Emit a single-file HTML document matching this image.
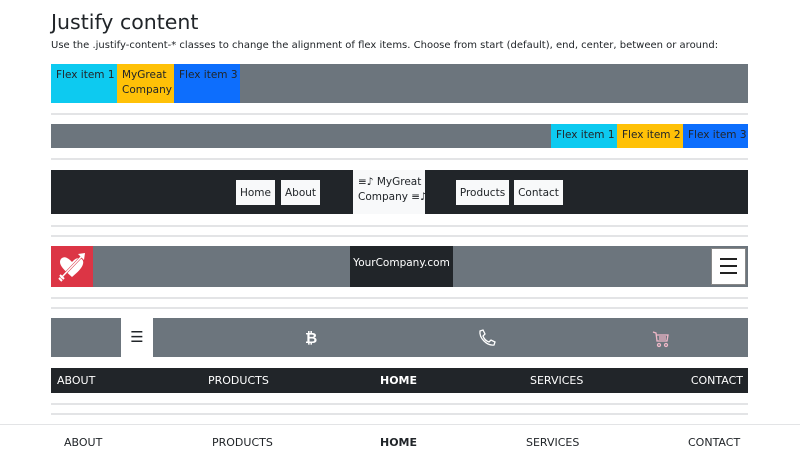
<!DOCTYPE html>
<html><head><style>
*{margin:0;padding:0;box-sizing:border-box}
body{width:800px;height:450px;overflow:hidden;background:#fff;font-family:"DejaVu Sans","Liberation Sans",sans-serif;color:#212529;position:relative}
.a{position:absolute}
.hr{position:absolute;left:51px;width:697px;height:2px;background:#e3e4e6}
.t{font-size:10.5px;line-height:15px;white-space:nowrap}
.btn{position:absolute;background:#f8f9fa;font-size:10.5px;display:flex;align-items:center;justify-content:center;color:#212529;white-space:nowrap}
.nav{font-size:11px;color:#fff;position:absolute;top:0;line-height:25px}
</style></head><body>
<div class="a" style="left:51px;top:8px;font-size:20.5px;line-height:28px">Justify content</div>
<div class="a" style="left:51px;top:39px;font-size:10px;line-height:14px;white-space:nowrap">Use the .justify-content-* classes to change the alignment of flex items. Choose from start (default), end, center, between or around:</div>

<div class="a" style="left:51px;top:64px;width:697px;height:39px;background:#6c757d"></div>
<div class="a t" style="left:51px;top:64px;width:66px;height:39px;background:#0dcaf0;padding:4px 5px">Flex item 1</div>
<div class="a t" style="left:117px;top:64px;width:57px;height:39px;background:#ffc107;padding:4px 5px">MyGreat<br>Company</div>
<div class="a t" style="left:174px;top:64px;width:66px;height:39px;background:#0d6efd;padding:4px 5px">Flex item 3</div>
<div class="hr" style="top:113px"></div>

<div class="a" style="left:51px;top:124px;width:697px;height:24px;background:#6c757d"></div>
<div class="a t" style="left:551px;top:124px;width:66px;height:24px;background:#0dcaf0;padding:4px 5px">Flex item 1</div>
<div class="a t" style="left:617px;top:124px;width:66px;height:24px;background:#ffc107;padding:4px 5px">Flex item 2</div>
<div class="a t" style="left:683px;top:124px;width:65px;height:24px;background:#0d6efd;padding:4px 5px">Flex item 3</div>
<div class="hr" style="top:158px"></div>

<div class="a" style="left:51px;top:170px;width:697px;height:44px;background:#212529"></div>
<div class="btn" style="left:236px;top:180px;width:39px;height:25px">Home</div>
<div class="btn" style="left:281px;top:180px;width:39px;height:25px">About</div>
<div class="a t" style="left:353px;top:170px;width:72px;height:44px;background:#f8f9fa;padding:5px 5px">≡♪ MyGreat<br>Company ≡♪</div>
<div class="btn" style="left:456px;top:180px;width:53px;height:25px">Products</div>
<div class="btn" style="left:514px;top:180px;width:49px;height:25px">Contact</div>
<div class="hr" style="top:225px"></div>
<div class="hr" style="top:235px"></div>

<div class="a" style="left:51px;top:246px;width:697px;height:41px;background:#6c757d"></div>
<div class="a" style="left:51px;top:246px;width:42px;height:41px;background:#dc3545"></div>
<svg class="a" style="left:56px;top:250px" width="32" height="32" viewBox="0 0 32 32"><path d="M16 27 C8 20 4 16 4 12 C4 8 8 6 11 8 C13 9 14 10 16 12 C18 10 20 8 23 8 C26 8 28 11 27 14 C26 18 22 22 16 27Z" fill="#fff"/><path d="M5 28 L26 6" stroke="#dc3545" stroke-width="2.5"/><path d="M5 28 L26 6" stroke="#fff" stroke-width="1.5"/><path d="M22 4 L29 3 L28 10Z" fill="#fff"/><path d="M4 25 L8 29 M3 28 L6 31" stroke="#fff" stroke-width="2"/></svg>
<div class="a" style="left:350px;top:246px;width:103px;height:41px;background:#212529;color:#fff;font-size:10.5px;line-height:34px;text-align:center;white-space:nowrap">YourCompany.com</div>
<div class="a" style="left:711px;top:248px;width:35px;height:37px;background:#fff;border:1px solid #888"></div>
<div class="a" style="left:720px;top:258px;width:17px;height:2px;background:#222;box-shadow:0 7px 0 #222,0 14px 0 #222"></div>
<div class="hr" style="top:297px"></div>
<div class="hr" style="top:307px"></div>

<div class="a" style="left:51px;top:318px;width:70px;height:39px;background:#6c757d"></div>
<div class="a" style="left:121px;top:318px;width:32px;height:39px;background:#fff;font-size:15px;line-height:39px;text-align:center">☰</div>
<div class="a" style="left:153px;top:318px;width:595px;height:39px;background:#6c757d"></div>
<div class="a" style="left:305px;top:328px;color:#fff;font-size:15px;font-weight:bold;line-height:20px">₿</div>
<svg class="a" style="left:477px;top:328px" width="20" height="20" viewBox="0 0 20 20"><path d="M3 3 L6 2 L8 6 L6 8 C7 11 9 13 12 14 L14 12 L18 14 L17 17 C10 18 2 10 3 3Z" fill="none" stroke="#fff" stroke-width="1.3"/></svg>
<svg class="a" style="left:651px;top:329px" width="20" height="20" viewBox="0 0 20 20" fill="none" stroke="#f0b8c8" stroke-width="1.3"><path d="M2 3 L5 4 L6 12 L16 12 L17 6 L5 6"/><path d="M8 8 H15 M8 10 H15"/><circle cx="8" cy="16" r="1.5"/><circle cx="15" cy="16" r="1.5"/></svg>

<div class="a" style="left:51px;top:368px;width:697px;height:25px;background:#212529">
<span class="nav" style="left:6px">ABOUT</span>
<span class="nav" style="left:157px">PRODUCTS</span>
<span class="nav" style="left:329px;font-weight:bold">HOME</span>
<span class="nav" style="left:479px">SERVICES</span>
<span class="nav" style="right:5px">CONTACT</span>
</div>
<div class="hr" style="top:403px"></div>
<div class="hr" style="top:413px"></div>

<div class="a" style="left:0;top:424px;width:800px;height:26px;border-top:1px solid #e3e4e6;background:#fff;font-size:11px">
<span class="a" style="left:64px;top:11px">ABOUT</span>
<span class="a" style="left:212px;top:11px">PRODUCTS</span>
<span class="a" style="left:380px;top:11px;font-weight:bold">HOME</span>
<span class="a" style="left:526px;top:11px">SERVICES</span>
<span class="a" style="left:688px;top:11px">CONTACT</span>
</div>
</body></html>
